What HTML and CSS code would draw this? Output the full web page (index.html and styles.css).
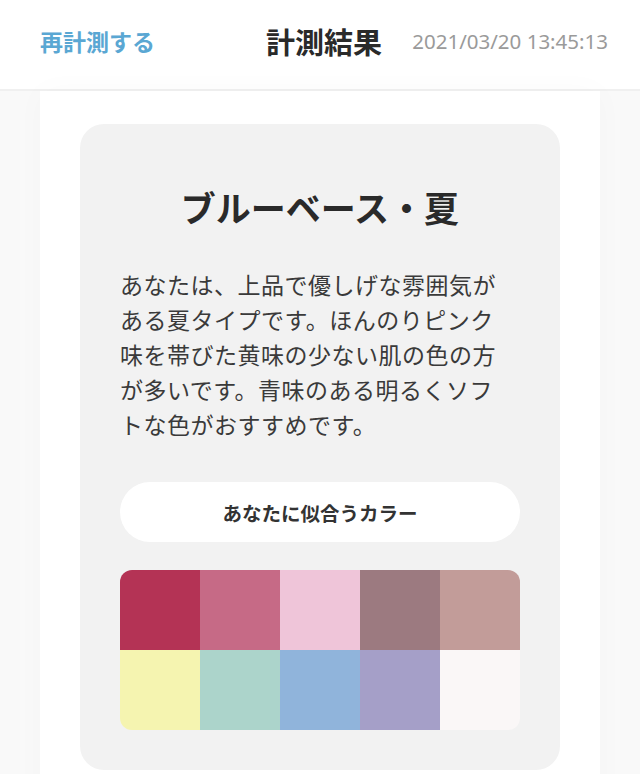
FILE: index.html
```html
<!DOCTYPE html>
<html lang="ja">
<head>
    <meta charset="UTF-8">
    <meta name="viewport" content="width=device-width, initial-scale=1.0">
    <title>計測結果</title>
    <link rel="stylesheet" href="styles.css">
</head>
<body>
    <header class="topbar">
        <a class="retry" href="#">再計測する</a>
        <h1 class="topbar-title">計測結果</h1>
        <span class="timestamp">2021/03/20 13:45:13</span>
    </header>

    <main class="page">
        <section class="result-card">
            <h2 class="result-title">ブルーベース・夏</h2>
            <p class="result-text">あなたは、上品で優しげな雰囲気がある夏タイプです。ほんのりピンク味を帯びた黄味の少ない肌の色の方が多いです。青味のある明るくソフトな色がおすすめです。</p>

            <button class="colors-button">あなたに似合うカラー</button>

            <div class="palette">
                <span class="swatch c1"></span>
                <span class="swatch c2"></span>
                <span class="swatch c3"></span>
                <span class="swatch c4"></span>
                <span class="swatch c5"></span>
                <span class="swatch c6"></span>
                <span class="swatch c7"></span>
                <span class="swatch c8"></span>
                <span class="swatch c9"></span>
                <span class="swatch c10"></span>
            </div>
        </section>
    </main>
</body>
</html>
```

FILE: styles.css
```css
body {
    margin: 0;
    background-color: #f9f9f9;
    font-family: "Noto Sans CJK JP", "Noto Sans", sans-serif;
    color: #333;
}

.topbar {
    display: grid;
    grid-template-columns: 1fr auto 1fr;
    align-items: center;
    height: 81px;
    padding: 0 32px 8px 40px;
    background-color: #fff;
    border-bottom: 2px solid #f0f0f0;
}

.retry {
    justify-self: start;
    color: #5aa7d3;
    font-size: 23px;
    font-weight: 700;
    text-decoration: none;
}

.topbar-title {
    margin: 0;
    font-size: 29px;
    font-weight: 700;
    color: #2a2a2a;
}

.timestamp {
    justify-self: end;
    font-family: "Noto Sans", sans-serif;
    font-size: 20.5px;
    color: #9a9a9a;
}

.page {
    width: 480px;
    margin: 0 auto;
    padding: 33px 40px 40px;
    background-color: #fff;
    box-shadow: 0 0 30px rgba(0, 0, 0, 0.025);
}

.result-card {
    padding: 60px 40px 40px;
    background-color: #f2f2f2;
    border-radius: 24px;
}

.result-title {
    margin: 0;
    font-size: 35px;
    line-height: 46px;
    font-weight: 700;
    text-align: center;
    color: #2a2a2a;
}

/* 16 characters per line */
.result-text {
    margin: 37px 0 0;
    padding-right: 10px;
    font-size: 23px;
    line-height: 35px;
    letter-spacing: 0.5px;
    color: #3a3a3a;
}

.colors-button {
    display: block;
    width: 100%;
    height: 60px;
    margin-top: 40px;
    border: none;
    border-radius: 30px;
    background-color: #fff;
    font-family: inherit;
    font-size: 19.5px;
    font-weight: 700;
    color: #333;
}

.palette {
    display: grid;
    grid-template-columns: repeat(5, 1fr);
    grid-auto-rows: 80px;
    margin-top: 28px;
    border-radius: 12px;
    overflow: hidden;
}

.c1 { background-color: #b43355; }
.c2 { background-color: #c66a86; }
.c3 { background-color: #efc5d9; }
.c4 { background-color: #9c7a80; }
.c5 { background-color: #c29c99; }
.c6 { background-color: #f5f4b0; }
.c7 { background-color: #acd4cb; }
.c8 { background-color: #90b4db; }
.c9 { background-color: #a59fc8; }
.c10 { background-color: #faf7f7; }
```
